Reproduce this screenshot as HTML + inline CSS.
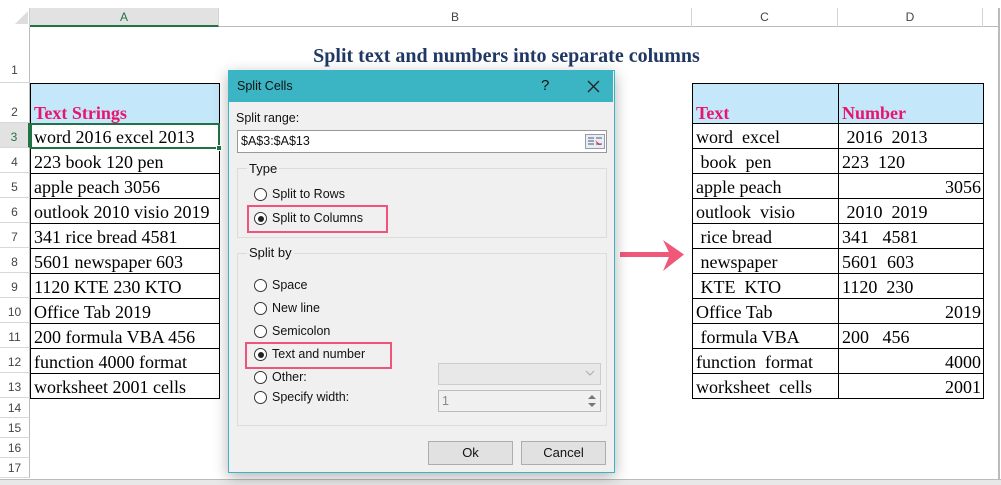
<!DOCTYPE html>
<html><head><meta charset="utf-8"><style>
*{margin:0;padding:0;box-sizing:border-box}
body{width:1001px;height:485px;background:#fff;position:relative;overflow:hidden;font-family:"Liberation Sans",sans-serif}
.a{position:absolute}
.ch{font-size:12px;color:#444;text-align:center;top:8px;height:19px;line-height:19px;border-right:1px solid #d4d4d4}
.rh{left:0;width:30px;font-size:12px;color:#444;text-align:center;border-bottom:1px solid #d8d8d8;border-right:1px solid #bbb}
.c{font-family:"Liberation Serif",serif;font-size:18px;color:#000;border:1px solid #000;padding-left:3px;line-height:26px;white-space:pre;overflow:hidden}
.h{background:#c5e7fa;color:#e8146e;font-weight:bold;line-height:20px;padding-top:19px}
.dl{font-family:"Liberation Sans",sans-serif;font-size:12.5px;color:#111}
.rad{width:13px;height:13px;border:1px solid #333;border-radius:50%;background:#fff}
.rad.on::after{content:"";position:absolute;left:2.5px;top:2.5px;width:6px;height:6px;border-radius:50%;background:#222}
.pk{border:2px solid #f0547a}
.grp{border:1px solid #dcdcdc}
.btn{background:#e1e1e1;border:1px solid #adadad;text-align:center;line-height:22px;font-size:13px;color:#111}
</style></head><body>
<div class="a" style="left:0;top:8px;width:1000px;height:19px;background:#fff;border-bottom:1px solid #bbb"></div>
<div class="a" style="left:0;top:8px;width:30px;height:19px;background:#fff;border-right:1px solid #ccc"></div>
<svg class="a" style="left:15px;top:11px" width="13" height="13"><polygon points="13,0 13,13 0,13" fill="#ddd"/></svg>
<div class="a ch" style="left:30px;width:189px;background:#e2e2e2;color:#217346;border-bottom:2px solid #217346;height:19px">A</div>
<div class="a ch" style="left:219px;width:473px">B</div>
<div class="a ch" style="left:692px;width:146px">C</div>
<div class="a ch" style="left:838px;width:145px">D</div>
<div class="a" style="left:998px;top:8px;width:2px;height:472px;background:#bbb"></div>
<div class="a rh" style="top:27px;height:56px;line-height:86px">1</div>
<div class="a rh" style="top:83px;height:40px;line-height:58px">2</div>
<div class="a rh" style="top:123px;height:25px;line-height:28px;background:#e2e2e2;color:#217346;border-right:2px solid #217346">3</div>
<div class="a rh" style="top:148px;height:25px;line-height:28px">4</div>
<div class="a rh" style="top:173px;height:25px;line-height:28px">5</div>
<div class="a rh" style="top:198px;height:25px;line-height:28px">6</div>
<div class="a rh" style="top:223px;height:25px;line-height:28px">7</div>
<div class="a rh" style="top:248px;height:25px;line-height:28px">8</div>
<div class="a rh" style="top:273px;height:25px;line-height:28px">9</div>
<div class="a rh" style="top:298px;height:25px;line-height:28px">10</div>
<div class="a rh" style="top:323px;height:25px;line-height:28px">11</div>
<div class="a rh" style="top:348px;height:25px;line-height:28px">12</div>
<div class="a rh" style="top:373px;height:25px;line-height:28px">13</div>
<div class="a rh" style="top:398px;height:20px;line-height:20px">14</div>
<div class="a rh" style="top:418px;height:20px;line-height:20px">15</div>
<div class="a rh" style="top:438px;height:20px;line-height:20px">16</div>
<div class="a rh" style="top:458px;height:20px;line-height:20px">17</div>
<div class="a" style="left:0;top:479px;width:1001px;height:6px;background:#e8e8e8;border-top:1px solid #bbb"></div>
<div class="a" style="left:219px;top:45px;width:575px;text-align:center;font-family:'Liberation Serif',serif;font-weight:bold;font-size:20px;color:#1f3864">Split text and numbers into separate columns</div>
<div class="a c h" style="left:30px;top:83px;width:190px;height:41px">Text Strings</div>
<div class="a c" style="left:30px;top:123px;width:190px;height:26px">word 2016 excel 2013</div>
<div class="a c" style="left:30px;top:148px;width:190px;height:26px">223 book 120 pen</div>
<div class="a c" style="left:30px;top:173px;width:190px;height:26px">apple peach 3056</div>
<div class="a c" style="left:30px;top:198px;width:190px;height:26px">outlook 2010 visio 2019</div>
<div class="a c" style="left:30px;top:223px;width:190px;height:26px">341 rice bread 4581</div>
<div class="a c" style="left:30px;top:248px;width:190px;height:26px">5601 newspaper 603</div>
<div class="a c" style="left:30px;top:273px;width:190px;height:26px">1120 KTE 230 KTO</div>
<div class="a c" style="left:30px;top:298px;width:190px;height:26px">Office Tab 2019</div>
<div class="a c" style="left:30px;top:323px;width:190px;height:26px">200 formula VBA 456</div>
<div class="a c" style="left:30px;top:348px;width:190px;height:26px">function 4000 format</div>
<div class="a c" style="left:30px;top:373px;width:190px;height:26px">worksheet 2001 cells</div>
<div class="a" style="left:30px;top:123px;width:190px;height:26px;border:2px solid #217346"></div>
<div class="a" style="left:216px;top:145px;width:6px;height:6px;background:#217346;border:1px solid #fff"></div>
<div class="a c h" style="left:692px;top:83px;width:147px;height:41px">Text</div>
<div class="a c h" style="left:838px;top:83px;width:146px;height:41px">Number</div>
<div class="a c" style="left:692px;top:123px;width:147px;height:26px">word  excel</div>
<div class="a c" style="left:838px;top:123px;width:146px;height:26px"> 2016  2013</div>
<div class="a c" style="left:692px;top:148px;width:147px;height:26px"> book  pen</div>
<div class="a c" style="left:838px;top:148px;width:146px;height:26px">223  120</div>
<div class="a c" style="left:692px;top:173px;width:147px;height:26px">apple peach</div>
<div class="a c" style="left:838px;top:173px;width:146px;height:26px;text-align:right;padding-right:2px">3056</div>
<div class="a c" style="left:692px;top:198px;width:147px;height:26px">outlook  visio</div>
<div class="a c" style="left:838px;top:198px;width:146px;height:26px"> 2010  2019</div>
<div class="a c" style="left:692px;top:223px;width:147px;height:26px"> rice bread</div>
<div class="a c" style="left:838px;top:223px;width:146px;height:26px">341   4581</div>
<div class="a c" style="left:692px;top:248px;width:147px;height:26px"> newspaper</div>
<div class="a c" style="left:838px;top:248px;width:146px;height:26px">5601  603</div>
<div class="a c" style="left:692px;top:273px;width:147px;height:26px"> KTE  KTO</div>
<div class="a c" style="left:838px;top:273px;width:146px;height:26px">1120  230</div>
<div class="a c" style="left:692px;top:298px;width:147px;height:26px">Office Tab</div>
<div class="a c" style="left:838px;top:298px;width:146px;height:26px;text-align:right;padding-right:2px">2019</div>
<div class="a c" style="left:692px;top:323px;width:147px;height:26px"> formula VBA</div>
<div class="a c" style="left:838px;top:323px;width:146px;height:26px">200   456</div>
<div class="a c" style="left:692px;top:348px;width:147px;height:26px">function  format</div>
<div class="a c" style="left:838px;top:348px;width:146px;height:26px;text-align:right;padding-right:2px">4000</div>
<div class="a c" style="left:692px;top:373px;width:147px;height:26px">worksheet  cells</div>
<div class="a c" style="left:838px;top:373px;width:146px;height:26px;text-align:right;padding-right:2px">2001</div>
<svg class="a" style="left:618px;top:238px" width="68" height="36"><rect x="2" y="14" width="52" height="5" fill="#f0587a"/><polygon points="45,2 66,16.5 45,33 52,16.5" fill="#f0587a"/></svg>
<div class="a" style="left:228px;top:70px;width:387px;height:403px;background:#f0f0f0;border:1.5px solid #3bb5c4;box-shadow:0 4px 14px rgba(0,0,0,.3)">
 <div class="a" style="left:0;top:0;width:384px;height:31px;background:#3bb5c4"></div>
 <div class="a dl" style="left:8px;top:8px;font-size:12.5px">Split Cells</div>
 <div class="a dl" style="left:312px;top:6px;font-size:15px">?</div>
 <svg class="a" style="left:358px;top:9px" width="13" height="13"><path d="M1 1L12 12M12 1L1 12" stroke="#222" stroke-width="1.3"/></svg>
 <div class="a dl" style="left:7px;top:40px">Split range:</div>
 <div class="a" style="left:8px;top:59px;width:370px;height:23px;background:#fff;border:1px solid #999"></div>
 <div class="a dl" style="left:12px;top:63px">$A$3:$A$13</div>
 <svg class="a" style="left:356px;top:63px" width="20" height="15"><rect x="0.5" y="0.5" width="19" height="14" fill="#e8eef6" stroke="#99a"/><path d="M3 4h6M3 7h6M3 10h6M11 4h6M11 10h6" stroke="#557" stroke-width="1"/><path d="M10 6l6 5-3 0z" fill="#e04040"/></svg>
 <div class="a grp" style="left:8px;top:97px;width:370px;height:70px"></div>
 <div class="a dl" style="left:18px;top:90px;background:#f0f0f0;padding:0 2px;font-size:13px">Type</div>
 <div class="a rad" style="left:25px;top:117px"></div><div class="a dl" style="left:43px;top:116px">Split to Rows</div>
 <div class="a rad on" style="left:25px;top:141px"></div><div class="a dl" style="left:43px;top:140px">Split to Columns</div>
 <div class="a pk" style="left:18px;top:134px;width:141px;height:28px"></div>
 <div class="a grp" style="left:8px;top:182px;width:370px;height:173px"></div>
 <div class="a dl" style="left:18px;top:174px;background:#f0f0f0;padding:0 2px;font-size:13px">Split by</div>
 <div class="a rad" style="left:25px;top:208px"></div><div class="a dl" style="left:43px;top:207px">Space</div>
 <div class="a rad" style="left:25px;top:231px"></div><div class="a dl" style="left:43px;top:230px">New line</div>
 <div class="a rad" style="left:25px;top:254px"></div><div class="a dl" style="left:43px;top:253px">Semicolon</div>
 <div class="a rad on" style="left:25px;top:277px"></div><div class="a dl" style="left:43px;top:276px">Text and number</div>
 <div class="a pk" style="left:16px;top:271px;width:147px;height:27px"></div>
 <div class="a rad" style="left:25px;top:300px"></div><div class="a dl" style="left:43px;top:299px">Other:</div>
 <div class="a rad" style="left:25px;top:320px"></div><div class="a dl" style="left:43px;top:319px">Specify width:</div>
 <div class="a" style="left:209px;top:292px;width:163px;height:22px;border:1px solid #ccc;background:#e8e8e8"></div>
 <svg class="a" style="left:356px;top:299px" width="10" height="7"><path d="M1 1l4 4 4-4" stroke="#aaa" fill="none"/></svg>
 <div class="a" style="left:209px;top:319px;width:163px;height:22px;border:1px solid #bbb;background:#f0f0f0"></div>
 <div class="a dl" style="left:213px;top:323px;color:#888">1</div>
 <svg class="a" style="left:357px;top:321px" width="12" height="18"><path d="M2 7l4-4 4 4z M2 11l4 4 4-4z" fill="#777"/></svg>
 <div class="a btn" style="left:199px;top:370px;width:85px;height:24px">Ok</div>
 <div class="a btn" style="left:292px;top:370px;width:85px;height:24px">Cancel</div>
</div>
</body></html>
